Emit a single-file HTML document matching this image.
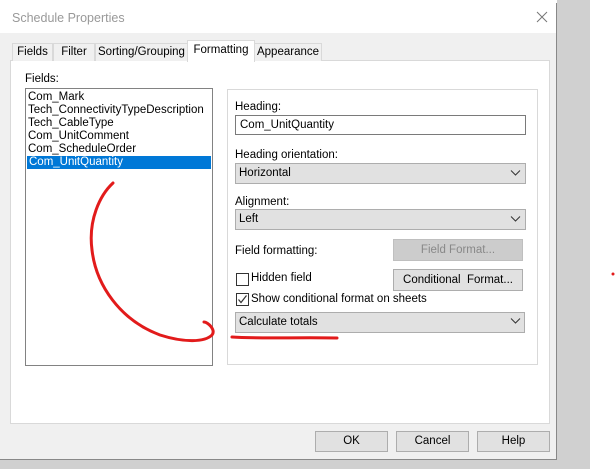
<html><head><style>*{box-sizing:border-box}</style></head><body style="margin:0;width:616px;height:469px;position:relative;background:#fff;font-family:'Liberation Sans',sans-serif;font-size:11.5px;color:#000;overflow:hidden">
<div style="position:absolute;left:557px;top:0;width:33px;height:469px;background:#d0d0d0"></div>
<div style="position:absolute;left:0;top:460px;width:590px;height:9px;background:#d0d0d0"></div>
<div style="position:absolute;left:0;top:3px;width:557px;height:457px;background:#f0f0f0;border-right:1px solid #888;border-bottom:1px solid #888">
 <div style="position:absolute;left:0;top:0;width:556px;height:30px;background:#fff"></div>
 <div style="position:absolute;left:12px;top:8px;font-size:12.5px;color:#999">Schedule Properties</div>
 <svg style="position:absolute;left:536px;top:8px" width="12" height="12"><path d="M1 1L11 11M11 1L1 11" stroke="#777" stroke-width="1"/></svg>
 <div style="position:absolute;left:10px;top:57px;width:540px;height:364px;background:#fff;border:1px solid #d9d9d9"></div>
 <div style="position:absolute;left:12px;top:40px;width:41px;height:18px;border:1px solid #d9d9d9;border-bottom:none;background:#f0f0f0;text-align:center;line-height:17px">Fields</div>
 <div style="position:absolute;left:53px;top:40px;width:42px;height:18px;border:1px solid #d9d9d9;border-bottom:none;background:#f0f0f0;text-align:center;line-height:17px">Filter</div>
 <div style="position:absolute;left:95px;top:40px;width:93px;height:18px;border:1px solid #d9d9d9;border-bottom:none;background:#f0f0f0;text-align:center;line-height:17px">Sorting/Grouping</div>
 <div style="position:absolute;left:187px;top:37px;width:68px;height:22px;border:1px solid #d9d9d9;border-bottom:none;background:#fff;text-align:center;line-height:19px">Formatting</div>
 <div style="position:absolute;left:254px;top:40px;width:68px;height:18px;border:1px solid #d9d9d9;border-bottom:none;background:#f0f0f0;text-align:center;line-height:17px">Appearance</div>
 <div style="position:absolute;left:25px;top:70px">Fields:</div>
 <div style="position:absolute;left:25px;top:85px;width:188px;height:278px;border:1px solid #828282;background:#fff;line-height:13px">
  <div style="padding-left:2px;margin-top:2px">Com_Mark</div>
  <div style="padding-left:2px">Tech_ConnectivityTypeDescription</div>
  <div style="padding-left:2px">Tech_CableType</div>
  <div style="padding-left:2px">Com_UnitComment</div>
  <div style="padding-left:2px">Com_ScheduleOrder</div>
  <div style="padding-left:2px;margin:0 1px;background:#0078d7;color:#fff">Com_UnitQuantity</div>
 </div>
 <div style="position:absolute;left:227px;top:86px;width:311px;height:276px;border:1px solid #d9d9d9"></div>
 <div style="position:absolute;left:235px;top:98px">Heading:</div>
 <div style="position:absolute;left:235px;top:112px;width:291px;height:20px;border:1px solid #7a7a7a;background:#fff;line-height:18px;padding-left:4px">Com_UnitQuantity</div>
 <div style="position:absolute;left:235px;top:146px">Heading orientation:</div>
 <div style="position:absolute;left:235px;top:160px;width:291px;height:21px;border:1px solid #adadad;background:#e1e1e1;line-height:19px;padding-left:3px">Horizontal</div>
 <div style="position:absolute;left:235px;top:193px">Alignment:</div>
 <div style="position:absolute;left:235px;top:206px;width:291px;height:21px;border:1px solid #adadad;background:#e1e1e1;line-height:19px;padding-left:3px">Left</div>
 <div style="position:absolute;left:235px;top:242px">Field formatting:</div>
 <div style="position:absolute;left:393px;top:236px;width:130px;height:22px;border:1px solid #bfbfbf;background:#cccccc;color:#888;text-align:center;line-height:20px">Field Format...</div>
 <div style="position:absolute;left:393px;top:266px;width:130px;height:22px;border:1px solid #adadad;background:#e1e1e1;text-align:center;line-height:20px">Conditional&nbsp; Format...</div>
 <div style="position:absolute;left:236px;top:270px;width:13px;height:13px;border:1px solid #333;background:#fff"></div>
 <div style="position:absolute;left:251px;top:269px">Hidden field</div>
 <div style="position:absolute;left:236px;top:290px;width:13px;height:13px;border:1px solid #333;background:#fff"></div>
 <svg style="position:absolute;left:237px;top:291px" width="11" height="11"><path d="M1.5 5.5L4 8.5L9.5 1.5" stroke="#333" stroke-width="1.2" fill="none"/></svg>
 <div style="position:absolute;left:251px;top:290px">Show conditional format on sheets</div>
 <div style="position:absolute;left:235px;top:309px;width:290px;height:21px;border:1px solid #adadad;background:#e1e1e1;line-height:19px;padding-left:3px">Calculate totals</div>
 <svg style="position:absolute;left:510px;top:314px" width="12" height="8"><path d="M1 1.5L5.5 6L10 1.5" stroke="#333" fill="none"/></svg>
 <svg style="position:absolute;left:510px;top:166px" width="12" height="8"><path d="M1 1.5L5.5 6L10 1.5" stroke="#333" fill="none"/></svg>
 <svg style="position:absolute;left:510px;top:212px" width="12" height="8"><path d="M1 1.5L5.5 6L10 1.5" stroke="#333" fill="none"/></svg>
 <div style="position:absolute;left:315px;top:428px;width:73px;height:21px;border:1px solid #adadad;background:#e1e1e1;text-align:center;line-height:19px">OK</div>
 <div style="position:absolute;left:396px;top:428px;width:73px;height:21px;border:1px solid #adadad;background:#e1e1e1;text-align:center;line-height:19px">Cancel</div>
 <div style="position:absolute;left:477px;top:428px;width:73px;height:21px;border:1px solid #adadad;background:#e1e1e1;text-align:center;line-height:19px">Help</div>
</div>
<svg style="position:absolute;left:0;top:0" width="616" height="469"><path d="M113 183C100 195 88 220 92 250C96 285 120 320 160 335C185 343 205 342 212 335C216 330 208 322 204 322" stroke="#e21b1b" stroke-width="3" fill="none" stroke-linecap="round"/><path d="M232 337C260 339 300 337 337 338" stroke="#e21b1b" stroke-width="3" fill="none" stroke-linecap="round"/><circle cx="613" cy="274" r="1.5" fill="#e21b1b"/></svg>
</body></html>
